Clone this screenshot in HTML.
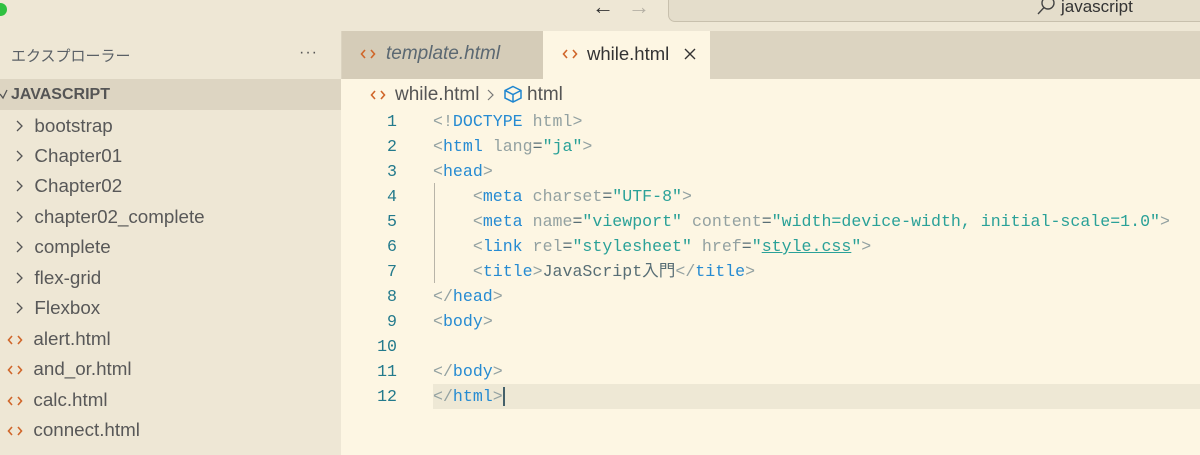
<!DOCTYPE html>
<html><head><meta charset="utf-8"><style>
*{margin:0;padding:0;box-sizing:border-box}
body{width:1200px;height:455px;overflow:hidden;background:#fdf6e3;font-family:"Liberation Sans","Noto Sans CJK JP",sans-serif;position:relative}
.abs{position:absolute}
#title{left:0;top:0;width:1200px;height:31px;background:#eee7d5}
#side{left:0;top:31px;width:341px;height:424px;background:#eee7d5}
#tabs{left:341px;top:31px;width:859px;height:48px;background:#dcd4c1}
.row{position:absolute;left:0;width:341px;height:30px;font-size:18.8px;color:#585858;line-height:30px}
.row svg{vertical-align:-1px}
.code{font-family:"Liberation Mono","Noto Sans CJK JP",monospace;font-size:16.6px;position:absolute;left:433px;line-height:25px;white-space:pre;color:#586e75}
.ln{font-family:"Liberation Mono",monospace;font-size:16.6px;position:absolute;left:360px;width:37px;text-align:right;line-height:25px;color:#237a8c}
.t{color:#268bd2}.p{color:#93a1a1}.s{color:#2aa198}.a{color:#93a1a1}
</style></head><body>
<svg width="0" height="0" style="position:absolute"><defs>
<symbol id="ic" viewBox="0 0 16 12"><path d="M5 2 L1.5 6 L5 10 M11 2 L14.5 6 L11 10" fill="none" stroke="#d0662a" stroke-width="1.6"/></symbol>
<symbol id="ch" viewBox="0 0 10 14"><path d="M3 2 L8 7 L3 12" fill="none" stroke="#555" stroke-width="1.3"/></symbol>
</defs></svg>
<div class="abs" id="title"></div>
<div class="abs" style="left:-6px;top:3px;width:13px;height:13px;border-radius:50%;background:#2fc140"></div>
<div class="abs" style="left:592px;top:-6px;font-size:22px;color:#333">&#8592;</div>
<div class="abs" style="left:628px;top:-6px;font-size:22px;color:#b5b0a5">&#8594;</div>
<div class="abs" style="left:668px;top:-10px;width:560px;height:32px;border:1px solid #c8c0ad;border-radius:7px;background:#e4ddcb"></div>
<svg class="abs" style="left:1036px;top:-4px" width="20" height="22"><circle cx="12" cy="7" r="6" fill="none" stroke="#444" stroke-width="1.4"/><line x1="8" y1="11.5" x2="2" y2="18" stroke="#444" stroke-width="1.4"/></svg>
<div class="abs" style="left:1061px;top:-3px;font-size:17px;color:#333">javascript</div>

<div class="abs" id="side"></div>
<div class="abs" style="left:11px;top:45px;font-size:15px;color:#5a6066">エクスプローラー</div>
<div class="abs" style="left:299px;top:44px;font-size:16px;color:#555;letter-spacing:1px">···</div>
<div class="abs" style="left:0;top:79px;width:341px;height:31px;background:#ddd5c2"></div>
<svg class="abs" style="left:0;top:88px" width="8" height="12"><path d="M0 6 L3 10 L7 2" fill="none" stroke="#555" stroke-width="1.3"/></svg>
<div class="abs" style="left:11px;top:86px;font-size:16px;font-weight:bold;color:#555">JAVASCRIPT</div>
<div class="row" style="top:111px"><svg style="margin-left:14px" width="10" height="14"><use href="#ch"/></svg>&nbsp; bootstrap</div>
<div class="row" style="top:141px"><svg style="margin-left:14px" width="10" height="14"><use href="#ch"/></svg>&nbsp; Chapter01</div>
<div class="row" style="top:171px"><svg style="margin-left:14px" width="10" height="14"><use href="#ch"/></svg>&nbsp; Chapter02</div>
<div class="row" style="top:202px"><svg style="margin-left:14px" width="10" height="14"><use href="#ch"/></svg>&nbsp; chapter02_complete</div>
<div class="row" style="top:232px"><svg style="margin-left:14px" width="10" height="14"><use href="#ch"/></svg>&nbsp; complete</div>
<div class="row" style="top:263px"><svg style="margin-left:14px" width="10" height="14"><use href="#ch"/></svg>&nbsp; flex-grid</div>
<div class="row" style="top:293px"><svg style="margin-left:14px" width="10" height="14"><use href="#ch"/></svg>&nbsp; Flexbox</div>
<div class="row" style="top:324px"><svg style="margin-left:7px" width="16" height="12"><use href="#ic"/></svg>&nbsp; alert.html</div>
<div class="row" style="top:354px"><svg style="margin-left:7px" width="16" height="12"><use href="#ic"/></svg>&nbsp; and_or.html</div>
<div class="row" style="top:385px"><svg style="margin-left:7px" width="16" height="12"><use href="#ic"/></svg>&nbsp; calc.html</div>
<div class="row" style="top:415px"><svg style="margin-left:7px" width="16" height="12"><use href="#ic"/></svg>&nbsp; connect.html</div>

<div class="abs" id="tabs"></div>
<div class="abs" style="left:342px;top:31px;width:201px;height:48px;background:#d5ccb8"></div>
<svg class="abs" style="left:360px;top:48px" width="16" height="12"><use href="#ic"/></svg>
<div class="abs" style="left:386px;top:43px;font-size:19px;color:#5b6872"><i>template.html</i></div>
<div class="abs" style="left:543px;top:31px;width:167px;height:48px;background:#fdf6e3"></div>
<svg class="abs" style="left:562px;top:48px" width="16" height="12"><use href="#ic"/></svg>
<div class="abs" style="left:587px;top:43px;font-size:18.5px;color:#333">while.html</div>
<svg class="abs" style="left:683px;top:47px" width="14" height="14"><path d="M2 2 L12 12 M12 2 L2 12" stroke="#333" stroke-width="1.4"/></svg>

<svg class="abs" style="left:370px;top:89px" width="16" height="12"><use href="#ic"/></svg>
<div class="abs" style="left:395px;top:84px;font-size:19px;color:#555">while.html</div>
<svg class="abs" style="left:485px;top:88px" width="10" height="14"><path d="M3 2 L8 7 L3 12" fill="none" stroke="#777" stroke-width="1.2"/></svg>
<svg class="abs" style="left:503px;top:85px" width="20" height="19"><path d="M10 1.5 L18 5.5 L18 13 L10 17 L2 13 L2 5.5 Z M2 5.5 L10 9.5 L18 5.5 M10 9.5 L10 17" fill="none" stroke="#1f86d0" stroke-width="1.5"/></svg>
<div class="abs" style="left:527px;top:84px;font-size:19px;color:#555">html</div>

<div class="abs" style="left:433px;top:384px;width:767px;height:25px;background:#eee8d5"></div>
<div class="abs" style="left:434px;top:183px;width:1px;height:100px;background:#b8b4a8"></div>

<div class="ln" style="top:109px">1<br>2<br>3<br>4<br>5<br>6<br>7<br>8<br>9<br>10<br>11<br>12</div>
<div class="code" style="top:109px"><span class="p">&lt;!</span><span class="t">DOCTYPE</span><span class="a"> html</span><span class="p">&gt;</span>
<span class="p">&lt;</span><span class="t">html</span><span class="a"> lang</span>=<span class="s">"ja"</span><span class="p">&gt;</span>
<span class="p">&lt;</span><span class="t">head</span><span class="p">&gt;</span>
    <span class="p">&lt;</span><span class="t">meta</span><span class="a"> charset</span>=<span class="s">"UTF-8"</span><span class="p">&gt;</span>
    <span class="p">&lt;</span><span class="t">meta</span><span class="a"> name</span>=<span class="s">"viewport"</span><span class="a"> content</span>=<span class="s">"width=device-width, initial-scale=1.0"</span><span class="p">&gt;</span>
    <span class="p">&lt;</span><span class="t">link</span><span class="a"> rel</span>=<span class="s">"stylesheet"</span><span class="a"> href</span>=<span class="s">"<u>style.css</u>"</span><span class="p">&gt;</span>
    <span class="p">&lt;</span><span class="t">title</span><span class="p">&gt;</span>JavaScript入門<span class="p">&lt;/</span><span class="t">title</span><span class="p">&gt;</span>
<span class="p">&lt;/</span><span class="t">head</span><span class="p">&gt;</span>
<span class="p">&lt;</span><span class="t">body</span><span class="p">&gt;</span>

<span class="p">&lt;/</span><span class="t">body</span><span class="p">&gt;</span>
<span class="p">&lt;/</span><span class="t">html</span><span class="p">&gt;</span><span style="border-left:2px solid #44606a"></span></div>
</body></html>
